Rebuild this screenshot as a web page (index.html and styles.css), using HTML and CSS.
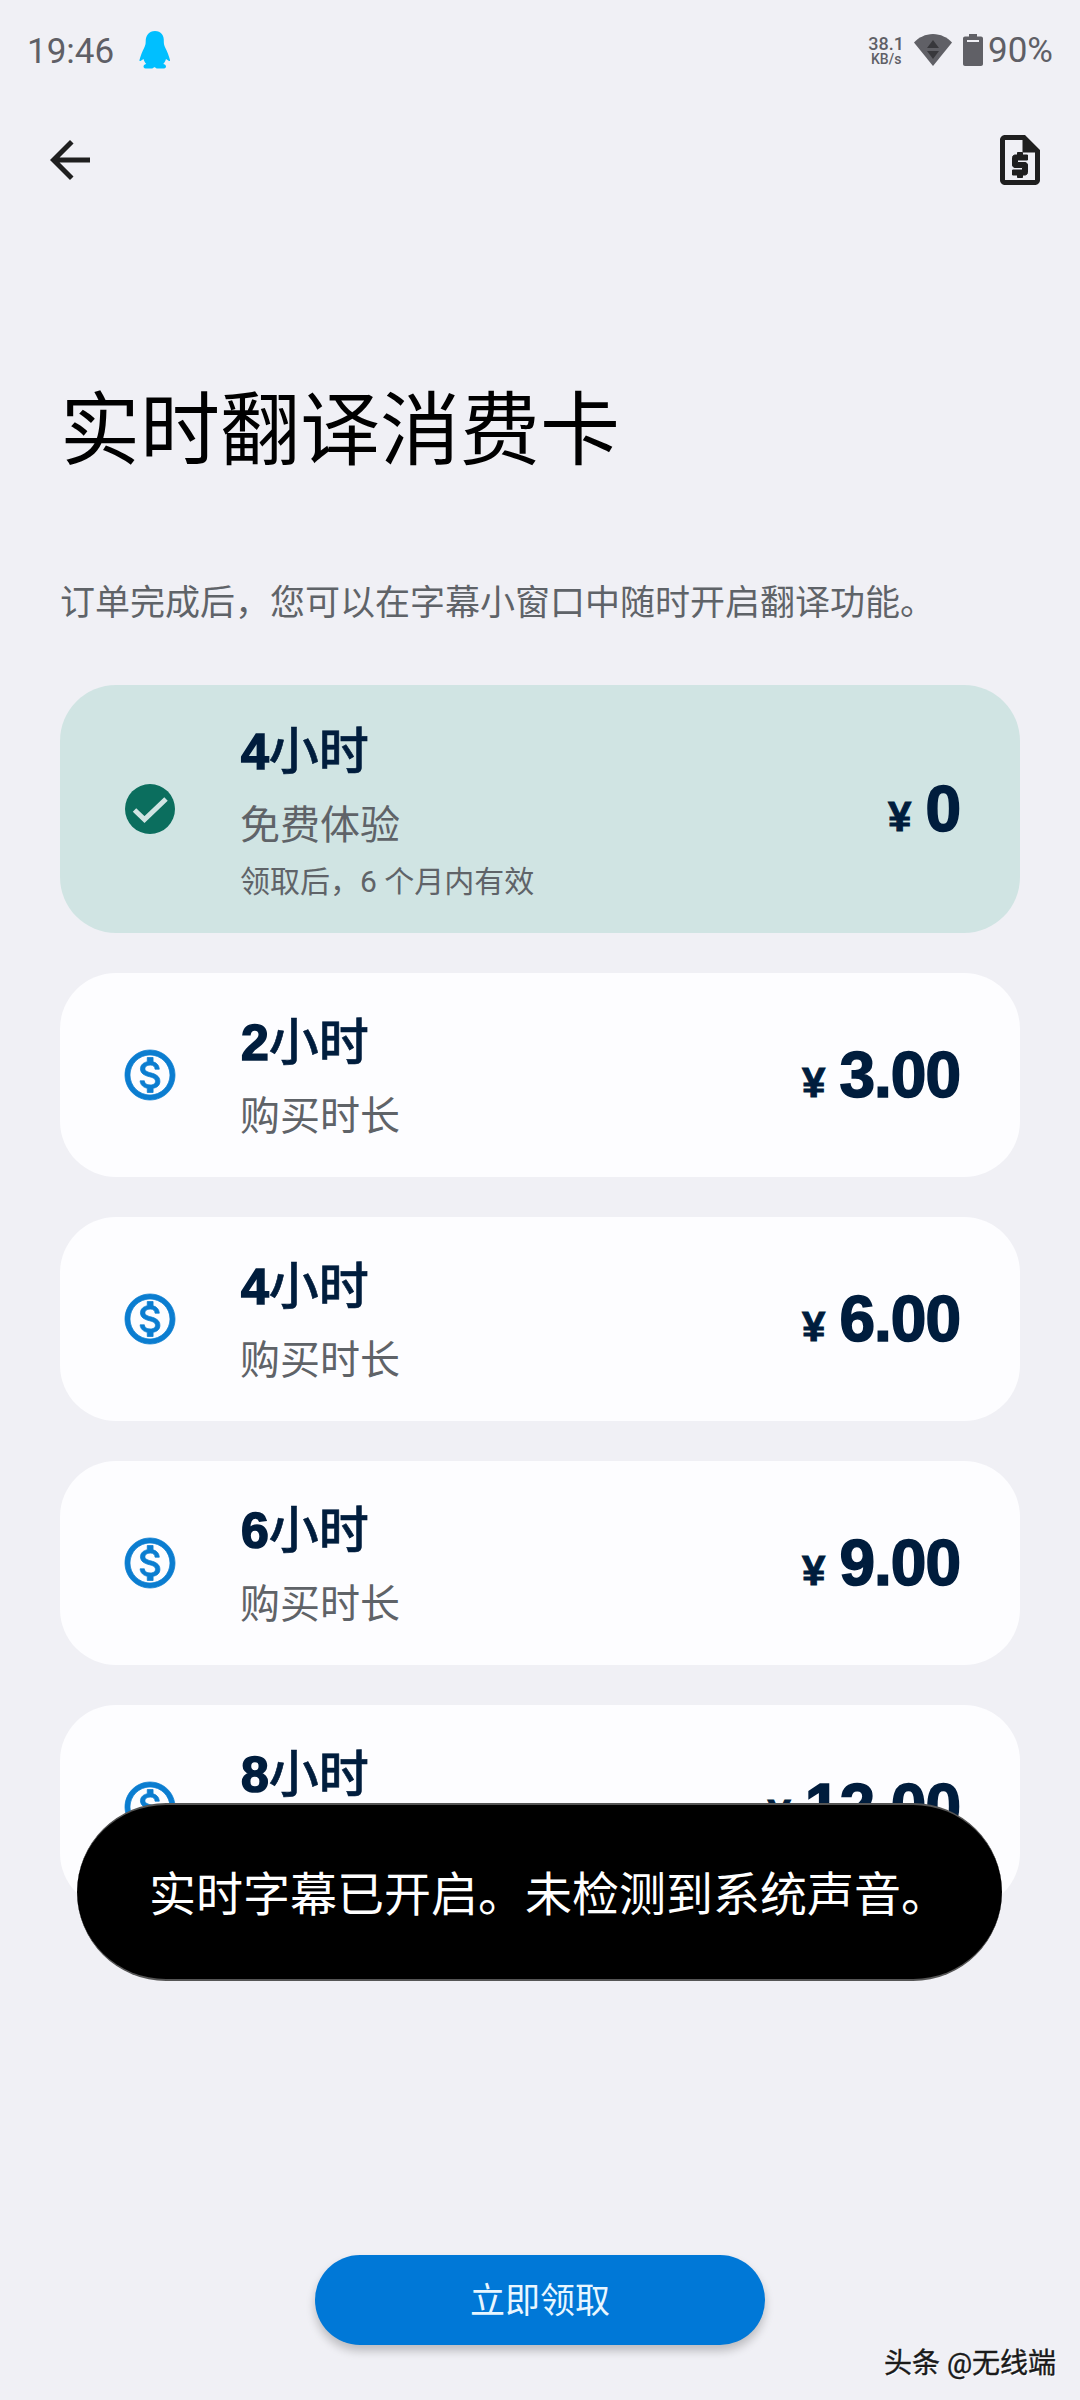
FILE: index.html
```html
<!DOCTYPE html>
<html lang="zh-CN">
<head>
    <meta charset="UTF-8">
    <meta name="viewport" content="width=device-width, initial-scale=1.0">
    <title>实时翻译消费卡</title>
    <link rel="stylesheet" href="styles.css">
</head>
<body>
    <div class="page">
        <div class="status-bar">
            <div class="status-left">
                <span class="clock">19:46</span>
                <svg class="penguin" viewBox="0 0 32 38"><path fill="#00bfff" d="M16 0c-6 0-9.300 4.500-9.300 10.500 0 2.500-.4 4-1.600 6.500C3.300 20.500 1.500 25 .5 29c-.2.900.3 1.300 1 .9l3-2c.6 2 1.500 3.700 2.800 5-1.300.4-2.800 1-2.800 2.500 0 1.600 1.600 2.100 3.500 2.100h4c1.400 0 2.500-.5 3-1.300h1c.5.800 1.600 1.300 3 1.300h4.500c1.900 0 3.500-.5 3.500-2.100 0-1.500-1.500-2.100-2.800-2.500 1.300-1.300 2.200-3 2.800-5l3 2c.7.400 1.200 0 1-.9-1-4-2.800-8.500-4.600-12-1.200-2.500-1.600-4-1.600-6.500C25.300 4.500 22 0 16 0z"/></svg>
            </div>
            <div class="status-right">
                <div class="speed"><span>38.1</span><span class="speed-unit">KB/s</span></div>
                <svg class="wifi" viewBox="0 0 38 32"><path fill="#606066" d="M19 32L0 8.500C4.500 3.500 11.500 0 19 0s14.500 3.500 19 8.500z"/><path fill="#38383c" d="M19 6l6 8H13zM13 17h12l-6 8z"/></svg>
                <svg class="battery" viewBox="0 0 20 32"><path fill="#606066" d="M6 0h8v2.500h4c1.100 0 2 .9 2 2V30c0 1.100-.9 2-2 2H2c-1.100 0-2-.9-2-2V4.500c0-1.100.9-2 2-2h4z"/><rect x="4" y="6" width="12" height="2" fill="#f0f0f5"/></svg>
                <span class="battery-text">90%</span>
            </div>
        </div>

        <div class="toolbar">
            <svg class="tool-icon" viewBox="0 0 24 24"><path d="M20 11H7.830l5.590-5.590L12 4l-8 8 8 8 1.410-1.410L7.830 13H20v-2z"/></svg>
            <svg class="tool-icon" viewBox="0 0 24 24"><path d="M14 2H6c-1.100 0-2 .9-2 2v16c0 1.100.89 2 1.990 2H18c1.100 0 2-.9 2-2V8l-6-6zM6 20V4h7v5h5v11H6z"/><path class="doc-sign" d="M11 19h2v-1h1c.55 0 1-.45 1-1v-3c0-.55-.45-1-1-1h-3v-1h4v-2h-2V9h-2v1h-1c-.55 0-1 .45-1 1v3c0 .55.45 1 1 1h3v1H9v2h2v1z"/></svg>
        </div>

        <h1 class="title">实时翻译消费卡</h1>
        <p class="subtitle">订单完成后，您可以在字幕小窗口中随时开启翻译功能。</p>

        <div class="plans">
            <div class="plan selected">
                <svg class="plan-icon" viewBox="0 0 50 50"><circle cx="25" cy="25" r="25" fill="#0b6e5e"/><path d="M9.500 26l10 9.500L41 15" fill="none" stroke="#d0e4e3" stroke-width="5"/></svg>
                <div class="plan-text">
                    <div class="plan-name"><b>4</b>小时</div>
                    <div class="plan-desc">免费体验</div>
                    <div class="plan-note">领取后，6 个月内有效</div>
                </div>
                <div class="price"><span class="yen">¥</span>0</div>
            </div>
            <div class="plan">
                <svg class="plan-icon coin" viewBox="2 2 20 20"><path d="M12 2C6.480 2 2 6.480 2 12s4.480 10 10 10 10-4.480 10-10S17.520 2 12 2zm0 18c-4.410 0-8-3.590-8-8s3.590-8 8-8 8 3.590 8 8-3.590 8-8 8zm.31-8.860c-1.770-.45-2.340-.94-2.340-1.670 0-.84.79-1.430 2.100-1.430 1.380 0 1.900.66 1.940 1.640h1.710c-.05-1.340-.87-2.570-2.490-2.970V5H10.900v1.690c-1.510.32-2.720 1.300-2.720 2.810 0 1.790 1.490 2.690 3.660 3.210 1.950.46 2.340 1.150 2.340 1.870 0 .53-.39 1.390-2.100 1.390-1.600 0-2.230-.72-2.320-1.640H8.040c.1 1.700 1.360 2.660 2.860 2.970V19h2.340v-1.670c1.520-.29 2.720-1.160 2.730-2.770-.01-2.200-1.900-2.960-3.660-3.420z"/></svg>
                <div class="plan-text">
                    <div class="plan-name"><b>2</b>小时</div>
                    <div class="plan-desc">购买时长</div>
                </div>
                <div class="price"><span class="yen">¥</span>3.00</div>
            </div>
            <div class="plan">
                <svg class="plan-icon coin" viewBox="2 2 20 20"><path d="M12 2C6.480 2 2 6.480 2 12s4.480 10 10 10 10-4.480 10-10S17.520 2 12 2zm0 18c-4.410 0-8-3.590-8-8s3.590-8 8-8 8 3.590 8 8-3.590 8-8 8zm.31-8.860c-1.770-.45-2.340-.94-2.340-1.670 0-.84.79-1.430 2.100-1.430 1.380 0 1.900.66 1.940 1.640h1.710c-.05-1.340-.87-2.570-2.490-2.970V5H10.900v1.690c-1.510.32-2.720 1.300-2.720 2.810 0 1.790 1.490 2.690 3.660 3.210 1.950.46 2.340 1.150 2.340 1.870 0 .53-.39 1.390-2.100 1.390-1.600 0-2.230-.72-2.320-1.640H8.040c.1 1.700 1.360 2.660 2.860 2.970V19h2.340v-1.670c1.520-.29 2.720-1.160 2.730-2.770-.01-2.200-1.900-2.960-3.660-3.420z"/></svg>
                <div class="plan-text">
                    <div class="plan-name"><b>4</b>小时</div>
                    <div class="plan-desc">购买时长</div>
                </div>
                <div class="price"><span class="yen">¥</span>6.00</div>
            </div>
            <div class="plan">
                <svg class="plan-icon coin" viewBox="2 2 20 20"><path d="M12 2C6.480 2 2 6.480 2 12s4.480 10 10 10 10-4.480 10-10S17.520 2 12 2zm0 18c-4.410 0-8-3.590-8-8s3.590-8 8-8 8 3.590 8 8-3.590 8-8 8zm.31-8.860c-1.770-.45-2.340-.94-2.340-1.670 0-.84.79-1.430 2.100-1.430 1.380 0 1.900.66 1.940 1.640h1.710c-.05-1.340-.87-2.570-2.490-2.970V5H10.900v1.690c-1.510.32-2.720 1.300-2.720 2.810 0 1.790 1.490 2.690 3.660 3.210 1.950.46 2.340 1.150 2.340 1.870 0 .53-.39 1.390-2.100 1.390-1.600 0-2.230-.72-2.320-1.640H8.040c.1 1.700 1.360 2.660 2.860 2.970V19h2.340v-1.670c1.520-.29 2.720-1.160 2.730-2.770-.01-2.200-1.900-2.960-3.660-3.420z"/></svg>
                <div class="plan-text">
                    <div class="plan-name"><b>6</b>小时</div>
                    <div class="plan-desc">购买时长</div>
                </div>
                <div class="price"><span class="yen">¥</span>9.00</div>
            </div>
            <div class="plan">
                <svg class="plan-icon coin" viewBox="2 2 20 20"><path d="M12 2C6.480 2 2 6.480 2 12s4.480 10 10 10 10-4.480 10-10S17.520 2 12 2zm0 18c-4.410 0-8-3.590-8-8s3.590-8 8-8 8 3.590 8 8-3.590 8-8 8zm.31-8.860c-1.770-.45-2.340-.94-2.340-1.670 0-.84.79-1.430 2.100-1.430 1.380 0 1.900.66 1.940 1.640h1.710c-.05-1.340-.87-2.570-2.490-2.970V5H10.900v1.690c-1.510.32-2.720 1.300-2.720 2.810 0 1.790 1.490 2.690 3.660 3.210 1.950.46 2.340 1.150 2.340 1.870 0 .53-.39 1.390-2.100 1.390-1.600 0-2.230-.72-2.320-1.640H8.040c.1 1.700 1.360 2.660 2.860 2.970V19h2.340v-1.670c1.520-.29 2.720-1.160 2.730-2.770-.01-2.200-1.900-2.960-3.660-3.420z"/></svg>
                <div class="plan-text">
                    <div class="plan-name"><b>8</b>小时</div>
                    <div class="plan-desc"></div>
                </div>
                <div class="price"><span class="yen">¥</span>12.00</div>
            </div>
        </div>

        <button class="claim" type="button">立即领取</button>

        <div class="toast">实时字幕已开启。未检测到系统声音。</div>
        <div class="watermark">头条 @无线端</div>
    </div>
</body>
</html>
```

FILE: styles.css
```css
* {
    box-sizing: border-box;
}

body {
    margin: 0;
    background-color: #f0f0f5;
    font-family: Roboto, "Noto Sans CJK SC", sans-serif;
}

.page {
    position: relative;
    width: 1080px;
    height: 2400px;
    overflow: hidden;
    display: flex;
    flex-direction: column;
    padding-bottom: 55px;
}

.status-bar {
    height: 100px;
    flex-shrink: 0;
    display: flex;
    justify-content: space-between;
    align-items: center;
    padding: 0 27px;
    color: #5f5f66;
}

.status-left,
.status-right {
    display: flex;
    align-items: center;
}

.clock {
    font-size: 35px;
    padding-top: 2px;
}

.penguin {
    width: 32px;
    height: 38px;
    margin-left: 25px;
}

.speed {
    display: flex;
    flex-direction: column;
    align-items: center;
    font-size: 18px;
    font-weight: 500;
    line-height: 17px;
}

.speed-unit {
    font-size: 14px;
    line-height: 14px;
}

.wifi {
    width: 38px;
    height: 32px;
    margin-left: 10px;
}

.battery {
    width: 20px;
    height: 32px;
    margin-left: 11px;
}

.battery-text {
    font-size: 35px;
    margin-left: 5px;
}

.toolbar {
    display: flex;
    justify-content: space-between;
    padding: 0 30px 0 40px;
    margin-top: 30px;
    flex-shrink: 0;
}

.tool-icon {
    width: 60px;
    height: 60px;
    fill: #1f1f1f;
}

.doc-sign {
    stroke: #1f1f1f;
    stroke-width: 0.4;
}

.title {
    margin: 191px 0 0 60px;
    font-size: 80px;
    font-weight: 400;
    line-height: 100px;
    color: #000000;
}

.subtitle {
    margin: 98px 0 0 60px;
    font-size: 35px;
    line-height: 50px;
    color: #5f6368;
}

.plans {
    margin: 56px 60px 0;
    display: flex;
    flex-direction: column;
    gap: 40px;
}

.plan {
    display: flex;
    align-items: center;
    padding: 0 60px 0 65px;
    height: 204px;
    background-color: #fdfdff;
    border-radius: 56px;
}

.plan.selected {
    height: 248px;
    background-color: #d0e4e3;
}

.plan-icon {
    width: 50px;
    height: 50px;
    flex-shrink: 0;
}

.plan-icon.coin {
    overflow: visible;
    fill: #0b7dd0;
    stroke: #0b7dd0;
    stroke-width: 0.3;
}

.plan-text {
    margin-left: 65px;
    padding-top: 5px;
    flex: 1;
}

.plan-name {
    font-size: 50px;
    font-weight: 500;
    line-height: 60px;
    color: #001d3d;
    -webkit-text-stroke: 0.6px #001d3d;
}

.plan-name b {
    margin-left: 1px;
    font-family: "Liberation Sans", sans-serif;
    font-weight: 700;
    -webkit-text-stroke: 1.6px #001d3d;
}

.plan-desc {
    min-height: 50px;
    margin-top: 19px;
    font-size: 40px;
    line-height: 50px;
    color: #5f6368;
}

.plan-note {
    margin-top: 11px;
    font-size: 30px;
    line-height: 40px;
    color: #5f6368;
}

.price {
    padding-top: 7px;
    font-family: "Liberation Sans", sans-serif;
    font-size: 64px;
    font-weight: 700;
    line-height: 70px;
    letter-spacing: -1px;
    color: #001d3d;
    -webkit-text-stroke: 1.6px #001d3d;
}

.yen {
    font-size: 42px;
    letter-spacing: 0;
    margin-right: 14px;
    -webkit-text-stroke: 1px #001d3d;
}

.claim {
    margin: auto auto 0;
    width: 450px;
    height: 90px;
    flex-shrink: 0;
    padding: 0 0 5px;
    border: none;
    border-radius: 45px;
    background-color: #0078d7;
    color: #e8f6ff;
    font-family: Roboto, "Noto Sans CJK SC", sans-serif;
    font-size: 35px;
    box-shadow: 0 6px 10px rgba(0, 0, 0, 0.22);
}

.toast {
    position: absolute;
    left: 77px;
    top: 1803px;
    width: 925px;
    height: 178px;
    display: flex;
    align-items: center;
    justify-content: center;
    padding: 0 0 3px 18px;
    background-color: #000000;
    border-top: 2px solid #555555;
    border-bottom: 2px solid #555555;
    border-radius: 89px;
    color: #ffffff;
    font-size: 47px;
}

.watermark {
    position: absolute;
    left: 884px;
    top: 2345px;
    font-size: 28px;
    line-height: 38px;
    color: #1a1a1a;
    text-shadow: 1px 1px 0 #ffffff;
    -webkit-text-stroke: 0.4px #1a1a1a;
}
```
